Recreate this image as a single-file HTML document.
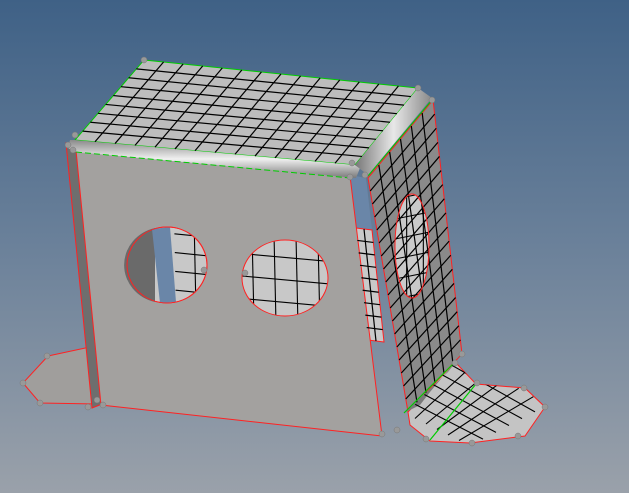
<!DOCTYPE html>
<html><head><meta charset="utf-8"><style>
html,body{margin:0;padding:0;width:629px;height:493px;overflow:hidden}
body{background:linear-gradient(#3f6186 0%,#6b819a 50%,#9aa1aa 100%)}
svg{position:absolute;left:0;top:0}
</style></head><body>
<svg id="s" width="629" height="493" viewBox="0 0 629 493">
<defs>
<linearGradient id="bar" x1="0" y1="0" x2="0" y2="1">
<stop offset="0" stop-color="#8a8a8a"/><stop offset="0.5" stop-color="#f0f0f0"/><stop offset="1" stop-color="#7a7a7a"/></linearGradient>
<linearGradient id="bar2" x1="0" y1="0" x2="1" y2="0">
<stop offset="0" stop-color="#777"/><stop offset="0.5" stop-color="#e8e8e8"/><stop offset="1" stop-color="#888"/></linearGradient>
<clipPath id="c1"><ellipse cx="167" cy="265" rx="40" ry="38"/></clipPath>
<clipPath id="c2"><ellipse cx="285" cy="278" rx="43" ry="38"/></clipPath>
<clipPath id="c3"><ellipse cx="412" cy="246" rx="17" ry="52"/></clipPath>
<clipPath id="c4"><polygon points="408,412 455,362 476,384 525,388 545,407 525,436 470,443 430,441 410,425"/></clipPath>
</defs>
<polygon points="48,356 90,347 97,404 40,403 23,383" fill="#a09e9c" stroke="#f22" stroke-width="1"/>
<polygon points="66,143 78,150 102,404 92,408" fill="#6e6e6e" stroke="#f22" stroke-width="1"/>
<polygon points="368,178 433,100 462,354 408,412" fill="#8a8a8a" stroke="#f22" stroke-width="1"/>
<polygon points="408,412 455,362 476,384 525,388 545,407 525,436 470,443 430,441 410,425" fill="#c4c4c4" stroke="#f22" stroke-width="1"/>
<polygon points="404,413 448,372 462,354 430,392 420,405" fill="#7a7a7a"/>
<polygon points="350,175 366,178 372,230 356,228" fill="#6a86a8"/>
<polygon points="356,228 372,230 384,342 368,340" fill="#c9c9c9" stroke="#f22" stroke-width="1"/>
<polygon points="76,150 350,176 382,436 101,405" fill="#a3a19f" stroke="#f22" stroke-width="1"/>
<polygon points="144,60 418,88 355,165 75,140" fill="#bdbdbd" stroke="#0c0" stroke-width="1"/>
<polygon points="70,140 75,140 355,165 360,168 356,178 76,152 68,148" fill="url(#bar)"/>
<polygon points="418,88 432,98 368,175 355,165" fill="url(#bar2)"/>
<line x1="76" y1="152" x2="350" y2="178" stroke="#0c0" stroke-width="1" stroke-dasharray="6 3"/>
<line x1="368" y1="176" x2="432" y2="100" stroke="#0c0" stroke-width="1"/>
<ellipse cx="167" cy="265" rx="40" ry="38" fill="#c8c8c8" stroke="#f22"/>
<path d="M155,228 A40,38 0 0 0 155,302 Z" fill="#6a6a6a"/>
<polygon points="152,229 170,227 176,302 160,303" fill="#6a86a8"/>
<ellipse cx="285" cy="278" rx="43" ry="38" fill="#c8c8c8"/>
<ellipse cx="412" cy="246" rx="17" ry="52" fill="#cacaca"/>
<g id="g" stroke="#000" stroke-width="1.2" fill="none"></g>
<g id="g1" clip-path="url(#c1)" stroke="#000" stroke-width="1.1"></g>
<g id="g2" clip-path="url(#c2)" stroke="#000" stroke-width="1.1"></g>
<g id="g3" clip-path="url(#c3)" stroke="#000" stroke-width="1.1"></g>
<g id="g4" clip-path="url(#c4)" stroke="#000" stroke-width="1.1"></g>
<ellipse cx="167" cy="265" rx="40" ry="38" fill="none" stroke="#f22"/>
<ellipse cx="285" cy="278" rx="43" ry="38" fill="none" stroke="#f22"/>
<ellipse cx="412" cy="246" rx="17" ry="52" fill="none" stroke="#f22"/>
<line x1="404" y1="413" x2="455" y2="362" stroke="#0c0" stroke-width="1.2"/>
<line x1="430" y1="440" x2="476" y2="384" stroke="#0c0" stroke-width="1.2"/>
<g fill="#999" stroke="#777" stroke-width="0.5">
<circle cx="144" cy="60" r="3"/><circle cx="418" cy="88" r="3"/><circle cx="432" cy="100" r="3"/>
<circle cx="75" cy="135" r="3"/><circle cx="68" cy="145" r="3"/><circle cx="73" cy="150" r="3"/>
<circle cx="352" cy="163" r="3"/><circle cx="350" cy="177" r="3"/><circle cx="365" cy="175" r="3"/>
<circle cx="47" cy="356" r="3"/><circle cx="23" cy="383" r="3"/><circle cx="40" cy="403" r="3"/>
<circle cx="88" cy="407" r="3"/><circle cx="97" cy="400" r="3"/><circle cx="103" cy="405" r="3"/>
<circle cx="382" cy="434" r="3"/><circle cx="204" cy="270" r="3"/><circle cx="245" cy="273" r="3"/>
<circle cx="462" cy="354" r="3"/><circle cx="455" cy="363" r="3"/><circle cx="477" cy="383" r="3"/>
<circle cx="524" cy="388" r="3"/><circle cx="545" cy="407" r="3"/><circle cx="518" cy="436" r="3"/>
<circle cx="472" cy="443" r="3"/><circle cx="426" cy="439" r="3"/><circle cx="397" cy="430" r="3"/>
</g>
</svg>
<script>
var N='http://www.w3.org/2000/svg',G;
function L(a,b){var l=document.createElementNS(N,'line');l.setAttribute('x1',a[0]);l.setAttribute('y1',a[1]);l.setAttribute('x2',b[0]);l.setAttribute('y2',b[1]);G.appendChild(l);}
function P(q,u,v){var a=[q[0][0]+(q[1][0]-q[0][0])*u,q[0][1]+(q[1][1]-q[0][1])*u],b=[q[3][0]+(q[2][0]-q[3][0])*u,q[3][1]+(q[2][1]-q[3][1])*u];return[a[0]+(b[0]-a[0])*v,a[1]+(b[1]-a[1])*v];}
function grid(id,q,nu,nv){G=document.getElementById(id);for(var i=1;i<nu;i++)L(P(q,i/nu,0),P(q,i/nu,1));for(var j=1;j<nv;j++)L(P(q,0,j/nv),P(q,1,j/nv));}
grid('g',[[144,60],[418,88],[355,165],[75,140]],14,9);
grid('g',[[368,178],[433,100],[462,354],[408,412]],6,18);
grid('g',[[356,228],[372,230],[384,342],[368,340]],2,9);
grid('g1',[[174,215],[234,221],[236,315],[176,309]],3,5);
grid('g2',[[230,230],[340,240],[342,330],[232,320]],5,4);
grid('g3',[[390,180],[440,170],[440,310],[390,320]],3,7);
grid('g4',[[404,413],[460,355],[548,405],[470,446]],6,6);
</script>
</body></html>
